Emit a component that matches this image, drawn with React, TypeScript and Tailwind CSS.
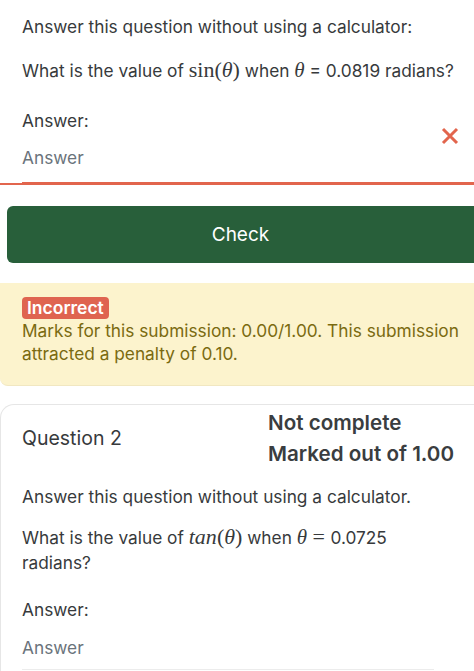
import React from "react";

const sans = { fontFamily: 'Inter, "Liberation Sans", Arial, sans-serif' };
const serif = { fontFamily: '"Liberation Serif", "DejaVu Serif", serif' };

export default function App() {
  return (
    <div className="w-[474px] h-[671px] overflow-hidden bg-white text-[#373a3c] text-[17.3px] leading-[24px]" style={sans}>
      <div className="px-[22px]">
        <div className="pt-[15px]">Answer this question without using a calculator:</div>
        <div className="mt-[19px] whitespace-nowrap">
          What is the value of{" "}
          <span className="text-[22px]" style={serif}>sin(<span className="italic">θ</span>)</span>{" "}
          when <span className="italic text-[21px]" style={serif}>θ</span> = 0.0819 radians?
        </div>
        <div className="mt-[26px]">Answer:</div>
      </div>
      <div className="relative">
        <div className="h-[48px] px-[22px] pt-[13px] text-[#6a737b]">Answer</div>
        <svg className="absolute right-[15px] top-[-6px]" width="18" height="18" viewBox="0 0 18 18">
          <path d="M2 2 L16 16 M16 2 L2 16" stroke="#e2654d" strokeWidth="3" />
        </svg>
        <div className="flex items-end h-[4px]">
          <div className="w-[22px] h-[2px] bg-[#e2654d]" />
          <div className="flex-1 h-[3.5px] bg-[#e2654d]" />
        </div>
      </div>
      <div className="pl-[7px] mt-[21px]">
        <div className="h-[57px] rounded-l-[6px] bg-[#285f3a] text-white text-[19px] flex items-center justify-center">
          Check
        </div>
      </div>
      <div className="mt-[20px] h-[103px] bg-[#fcf3cd] rounded-bl-[8px] border-b border-[#f1e7c1] pl-[22px] pr-[6px] pt-[13px] text-[#7a6a10] leading-[23px]">
        <span className="inline-block bg-[#df6450] text-white font-semibold rounded-[4px] px-[5px] leading-[22px] text-[17.5px]">Incorrect</span>
        <div>Marks for this submission: 0.00/1.00. This submission attracted a penalty of 0.10.</div>
      </div>
      <div className="mt-[18px] h-[300px] border-t border-l border-[#e6e6e6] rounded-tl-[14px]">
        <div className="flex items-start pt-[2px]">
          <div className="pl-[21px] pt-[19px] w-[267px] text-[19.5px]">Question 2</div>
          <div className="text-[20.6px] font-semibold leading-[31px] text-[#3a3d40]">
            <div>Not complete</div>
            <div>Marked out of 1.00</div>
          </div>
        </div>
        <div className="pl-[21px] pr-[40px]">
          <div className="mt-[16px]">Answer this question without using a calculator.</div>
          <div className="mt-[15px] leading-[25px]">
            What is the value of{" "}
            <span className="italic text-[22px]" style={serif}>tan</span>
            <span className="text-[22px]" style={serif}>(<span className="italic">θ</span>)</span>{" "}
            when <span className="italic text-[21px]" style={serif}>θ</span>
            <span className="text-[22px]" style={serif}> = </span>0.0725 radians?
          </div>
          <div className="mt-[23px]">Answer:</div>
          <div className="mt-[14px] text-[#6a737b]">Answer</div>
          <div className="mt-[9px] h-px bg-[#ececec]" />
        </div>
      </div>
    </div>
  );
}
